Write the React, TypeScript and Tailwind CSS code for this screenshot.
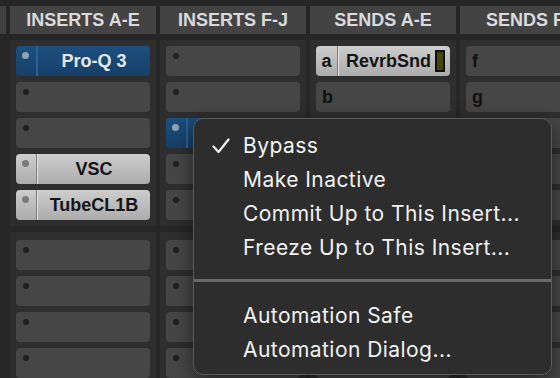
import React from 'react';

type Slot =
  | { kind: 'empty' }
  | { kind: 'blue'; label?: string }
  | { kind: 'gray'; label: string }
  | { kind: 'send'; letter?: string; label?: string };

const columns: { title: string; top: Slot[]; bottom: Slot[] }[] = [
  {
    title: 'INSERTS A-E',
    top: [
      { kind: 'blue', label: 'Pro-Q 3' },
      { kind: 'empty' },
      { kind: 'empty' },
      { kind: 'gray', label: 'VSC' },
      { kind: 'gray', label: 'TubeCL1B' },
    ],
    bottom: [{ kind: 'empty' }, { kind: 'empty' }, { kind: 'empty' }, { kind: 'empty' }],
  },
  {
    title: 'INSERTS F-J',
    top: [
      { kind: 'empty' },
      { kind: 'empty' },
      { kind: 'blue' },
      { kind: 'empty' },
      { kind: 'empty' },
    ],
    bottom: [{ kind: 'empty' }, { kind: 'empty' }, { kind: 'empty' }, { kind: 'empty' }],
  },
  {
    title: 'SENDS A-E',
    top: [
      { kind: 'send', letter: 'a', label: 'RevrbSnd' },
      { kind: 'send', letter: 'b' },
      { kind: 'send' },
      { kind: 'send' },
      { kind: 'send' },
    ],
    bottom: [{ kind: 'empty' }, { kind: 'empty' }, { kind: 'empty' }, { kind: 'empty' }],
  },
  {
    title: 'SENDS F-J',
    top: [
      { kind: 'send', letter: 'f' },
      { kind: 'send', letter: 'g' },
      { kind: 'send' },
      { kind: 'send' },
      { kind: 'send' },
    ],
    bottom: [{ kind: 'empty' }, { kind: 'empty' }, { kind: 'empty' }, { kind: 'empty' }],
  },
];

function SlotView({ slot }: { slot: Slot }) {
  if (slot.kind === 'empty') {
    return (
      <div className="h-[30px] rounded-[4px] bg-[#464646] pl-[7px] pt-[7px]">
        <div className="w-[6px] h-[6px] rounded-full bg-[#1f1f1f]" />
      </div>
    );
  }
  if (slot.kind === 'blue') {
    return (
      <div className="h-[30px] rounded-[4px] bg-gradient-to-b from-[#1d4f7e] to-[#163f68] flex">
        <div className="w-[22px] pl-[6px] pt-[6px] border-r-2 border-[#2a6296]">
          <div className="w-[7px] h-[7px] rounded-full bg-[#8fa3b8]" />
        </div>
        <div className="flex-1 flex items-center justify-center text-[18px] font-bold text-[#e4e8ec]">
          {slot.label}
        </div>
      </div>
    );
  }
  if (slot.kind === 'gray') {
    return (
      <div className="h-[30px] rounded-[4px] bg-gradient-to-b from-[#cdcdcd] to-[#acacac] flex">
        <div className="w-[21px] pl-[6px] pt-[6px] border-r border-[#7c7c7c]">
          <div className="w-[7px] h-[7px] rounded-full bg-[#7a7a7a]" />
        </div>
        <div className="w-px bg-[#e2e2e2]" />
        <div className="flex-1 flex items-center justify-center text-[18px] font-bold text-[#141414]">
          {slot.label}
        </div>
      </div>
    );
  }
  if (slot.label) {
    return (
      <div className="h-[30px] rounded-[4px] bg-gradient-to-b from-[#cdcdcd] to-[#acacac] flex items-center">
        <div className="w-[22px] h-full flex items-center justify-center text-[18px] font-bold text-[#141414] border-r border-[#7c7c7c]">
          {slot.letter}
        </div>
        <div className="w-px h-full bg-[#e2e2e2]" />
        <div className="flex-1 pl-[7px] text-[18px] font-bold text-[#141414]">{slot.label}</div>
        <div className="w-[10px] h-[22px] mr-[5px] border-2 border-[#111] bg-[#45470f]" />
      </div>
    );
  }
  return (
    <div className="h-[30px] rounded-[4px] bg-[#464646] flex items-center pl-[6px] text-[18px] font-bold text-[#111]">
      {slot.letter}
    </div>
  );
}

function Check() {
  return (
    <svg width="18" height="16" viewBox="0 0 18 16" className="block">
      <path d="M1.5 8.5 L6.5 14 L16.5 1.5" fill="none" stroke="#f2f2f2" strokeWidth="2.2" strokeLinecap="round" strokeLinejoin="round" />
    </svg>
  );
}

function MenuItem({ label, checked }: { label: string; checked?: boolean }) {
  return (
    <div className="h-[34px] flex items-center">
      <div className="w-[49px] pl-[18px] flex items-center">{checked && <Check />}</div>
      <span>{label}</span>
    </div>
  );
}

export default function App() {
  return (
    <div className="relative w-[560px] h-[378px] overflow-hidden bg-[#262626] font-['Liberation_Sans',Arial,sans-serif]">
      <div className="flex gap-[4px] pt-[6px]">
        {/* partial column at the left edge */}
        <div className="w-[6px] shrink-0">
          <div className="h-[28px] bg-[#404040]" />
        </div>

        {columns.map((col) => (
          <div key={col.title} className="w-[146px] shrink-0">
            <div className="h-[28px] bg-[#434343] flex items-center justify-center text-[18px] font-bold text-[#dadada] whitespace-nowrap">
              {col.title}
            </div>
            <div className="mt-[6px] bg-[#2e2e2e] px-[6px] pt-[6px] pb-[6px] flex flex-col gap-[6px]">
              {col.top.map((s, i) => (
                <SlotView key={i} slot={s} />
              ))}
            </div>
            <div className="mt-[6px] bg-[#2e2e2e] px-[6px] pt-[8px] pb-[6px] flex flex-col gap-[6px]">
              {col.bottom.map((s, i) => (
                <SlotView key={i} slot={s} />
              ))}
            </div>
          </div>
        ))}
      </div>

      {/* context menu */}
      <div className="absolute left-[193px] top-[118px] w-[359px] h-[257px] rounded-[10px] bg-[#2d2d2d] border border-[#5c5c5c] shadow-[0_6px_20px_rgba(0,0,0,0.5)] overflow-hidden font-['Inter',sans-serif] text-[21px] tracking-[0.45px] text-[#f2f2f2]">
        <div className="pt-[10px]">
          <MenuItem label="Bypass" checked />
          <MenuItem label="Make Inactive" />
          <MenuItem label="Commit Up to This Insert..." />
          <MenuItem label="Freeze Up to This Insert..." />
        </div>
        <div className="mt-[14px] h-[3px] bg-[#6a6a6a]" />
        <div className="pt-[17px]">
          <MenuItem label="Automation Safe" />
          <MenuItem label="Automation Dialog..." />
        </div>
      </div>
    </div>
  );
}
